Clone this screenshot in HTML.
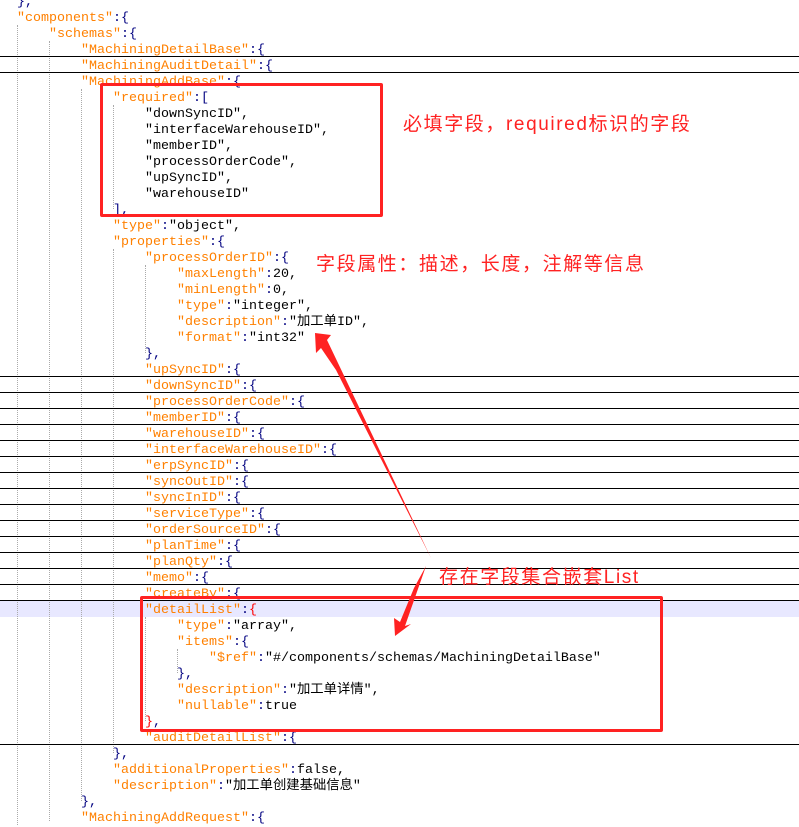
<!DOCTYPE html>
<html><head><meta charset="utf-8"><style>
body{margin:0;width:799px;height:815px;overflow:hidden;background:#fff;position:relative;font-family:"Liberation Mono","Noto Sans CJK SC",monospace;font-size:13.33px}
.r{position:absolute;left:0;width:799px;height:16px;line-height:16px;white-space:pre}
.f{border-bottom:1px solid #000;height:15px}
.k{color:#ff8000}.p{color:#000080}.s{color:#000}
.g{position:absolute;width:0;border-left:1px dotted #aaa}
.box{position:absolute;border:3px solid #f22;border-radius:2px}
.t{position:absolute;color:#f22;font-family:"Liberation Sans","Noto Sans CJK SC",sans-serif;font-size:19px;letter-spacing:1.6px;white-space:nowrap}
</style></head><body>
<div class="r" style="top:601px;background:#e8e8ff"></div>
<div class="g" style="left:17px;top:25px;height:800px"></div>
<div class="g" style="left:49px;top:41px;height:780px"></div>
<div class="g" style="left:81px;top:89px;height:712px"></div>
<div class="g" style="left:113px;top:105px;height:104px"></div>
<div class="g" style="left:113px;top:249px;height:504px"></div>
<div class="g" style="left:145px;top:265px;height:88px"></div>
<div class="g" style="left:145px;top:617px;height:104px"></div>
<div class="g" style="left:177px;top:649px;height:24px"></div>
<div id="c"></div>
<script>
var L=[
[0,'<span class="p">},</span>'],
[0,'<span class="k">"components"</span><span class="p">:{</span>'],
[1,'<span class="k">"schemas"</span><span class="p">:{</span>'],
[2,'K"MachiningDetailBase"',1],
[2,'K"MachiningAuditDetail"',1],
[2,'K"MachiningAddBase"'],
[3,'<span class="k">"required"</span><span class="p">:[</span>'],
[4,'"downSyncID",'],[4,'"interfaceWarehouseID",'],[4,'"memberID",'],[4,'"processOrderCode",'],[4,'"upSyncID",'],[4,'"warehouseID"'],
[3,'<span class="p">],</span>'],
[3,'V"type"|"object",'],
[3,'K"properties"'],
[4,'K"processOrderID"'],
[5,'V"maxLength"|20,'],[5,'V"minLength"|0,'],[5,'V"type"|"integer",'],[5,'V"description"|"加工单ID",'],[5,'V"format"|"int32"'],
[4,'<span class="p">},</span>'],
[4,'K"upSyncID"',1],[4,'K"downSyncID"',1],[4,'K"processOrderCode"',1],[4,'K"memberID"',1],[4,'K"warehouseID"',1],[4,'K"interfaceWarehouseID"',1],[4,'K"erpSyncID"',1],[4,'K"syncOutID"',1],[4,'K"syncInID"',1],[4,'K"serviceType"',1],[4,'K"orderSourceID"',1],[4,'K"planTime"',1],[4,'K"planQty"',1],[4,'K"memo"',1],[4,'K"createBy"',1],
[4,'<span class="k">"detailList"</span><span class="p">:</span><span style="color:#f00">{</span>'],
[5,'V"type"|"array",'],[5,'K"items"'],[6,'V"$ref"|"#/components/schemas/MachiningDetailBase"'],[5,'<span class="p">},</span>'],[5,'V"description"|"加工单详情",'],[5,'V"nullable"|true'],
[4,'<span style="color:#f00">}</span><span class="p">,</span>'],
[4,'K"auditDetailList"',1],
[3,'<span class="p">},</span>'],
[3,'V"additionalProperties"|false,'],[3,'V"description"|"加工单创建基础信息"'],
[2,'<span class="p">},</span>'],
[2,'K"MachiningAddRequest"']
];
var h='';
L.forEach(function(a,i){
var s=a[1];
if(s[0]=='K')s='<span class="k">'+s.slice(1)+'</span><span class="p">:{</span>';
else if(s[0]=='V'){var q=s.slice(1).split('|');s='<span class="k">'+q[0]+'</span><span class="p">:</span>'+q[1];}
var top=-7+16*i;
var ind=i==0?17:17+32*a[0];
h+='<div class="r'+(a[2]?' f':'')+'" style="top:'+top+'px"><span style="position:absolute;left:'+ind+'px;top:2px">'+s+'</span></div>';
});
document.getElementById('c').innerHTML=h;
</script>
<div class="box" style="left:100px;top:83px;width:277px;height:128px"></div>
<div class="box" style="left:140px;top:596px;width:517px;height:130px"></div>
<div class="t" style="left:403px;top:109px">必填字段，required标识的字段</div>
<div class="t" style="left:316px;top:249px">字段属性：描述，长度，注解等信息</div>
<div class="t" style="left:439px;top:562px">存在字段集合嵌套List</div>
<svg style="position:absolute;left:0;top:0" width="799" height="815">
<polygon points="315,333 331,335 327,340 431,558 336,370 321,348 316,353" fill="#f22"/>
<polygon points="426,566 405,626 411,624 395,636 394,618 400,622 414,588" fill="#f22"/>
</svg>
</body></html>
